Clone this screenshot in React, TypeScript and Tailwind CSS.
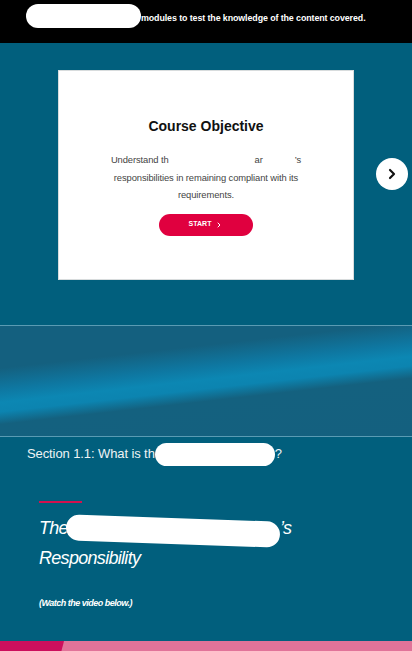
import React from "react";
import { ChevronRight } from "lucide-react";

export default function App() {
  return (
    <div className="w-[412px] h-[651px] overflow-hidden bg-[#015f7d] font-['Liberation_Sans',Arial,sans-serif]">
      {/* Top black bar */}
      <div className="h-[43px] bg-black flex items-start pl-[26px] pt-[4px]">
        <div className="w-[115px] h-[24px] bg-white rounded-full shrink-0" />
        <span className="text-white font-bold text-[8.9px] leading-[24px] mt-[2px] tracking-[-0.1px] whitespace-nowrap">
          modules to test the knowledge of the content covered.
        </span>
      </div>

      {/* Course card area */}
      <div className="relative h-[282px] bg-[#015f7d] pt-[27px] flex justify-center">
        <div className="w-[296px] h-[210px] bg-white border border-[#d8dcdd] flex flex-col items-center pt-[46px]">
          <h2 className="text-[14px] font-bold text-[#111] leading-[18px]">Course Objective</h2>
          <div className="mt-[16px] text-[9.4px] text-[#444] leading-[17.5px] text-center tracking-[-0.1px]">
            <div className="h-[17.5px]">
              <span>Understand th</span>
              <span className="inline-block w-[86px]" />
              <span>ar</span>
              <span className="inline-block w-[32px]" />
              <span>’s</span>
            </div>
            <div className="h-[17.5px]">responsibilities in remaining compliant with its</div>
            <div className="h-[17.5px]">requirements.</div>
          </div>
          <button className="mt-[10px] w-[94px] h-[22px] rounded-full bg-[#e0003f] text-white text-[7px] font-bold flex items-center justify-center gap-[4px]">
            <span>START</span>
            <ChevronRight size={8} strokeWidth={3} />
          </button>
        </div>
        <button className="absolute right-[4px] top-[115px] w-[32px] h-[32px] rounded-full bg-white flex items-center justify-center">
          <ChevronRight size={16} strokeWidth={3.2} className="text-[#111]" />
        </button>
      </div>

      {/* Decorative band */}
      <div className="h-px bg-[#5a9bb3]" />
      <div className="h-[110px] bg-[linear-gradient(173.6deg,#14607f_0%,#14607f_27%,#0e78a2_41%,#0c87b3_49%,#0c84b0_55%,#14617f_63%,#14607f_100%)]" />
      <div className="h-px bg-[#5a9bb3]" />

      {/* Section content */}
      <div className="h-[204px] bg-[#015f7d] pt-[5px]">
        <div className="pl-[27px] flex items-center h-[24px] text-[13px] text-[#eef3f5] tracking-[-0.1px]">
          <span>Section 1.1: What is th</span>
          <span className="inline-block w-[120px] h-[23px] bg-white rounded-full" />
          <span>?</span>
        </div>
        <div className="pl-[39px] mt-[35px]">
          <div className="w-[43px] h-[2px] bg-[#d4124e]" />
          <div className="mt-[10px] text-white italic text-[18px] leading-[30px] tracking-[-0.7px]">
            <div className="flex items-center h-[30px]">
              <span>The</span>
              <span className="inline-block w-[214px] h-[26px] bg-white rounded-full -ml-[2px] mt-[6px] rotate-[2deg]" />
              <span>’s</span>
            </div>
            <div>Responsibility</div>
          </div>
          <div className="mt-[24px] text-white italic font-bold text-[9px] tracking-[-0.5px]">
            (Watch the video below.)
          </div>
        </div>
      </div>

      {/* Bottom bar */}
      <div className="h-[10px] flex relative bg-[#e17399]">
        <div className="absolute left-0 top-0 h-[10px] w-[64px] bg-[#cc0f5d] [clip-path:polygon(0_0,100%_0,96%_100%,0_100%)]" />
      </div>
    </div>
  );
}
